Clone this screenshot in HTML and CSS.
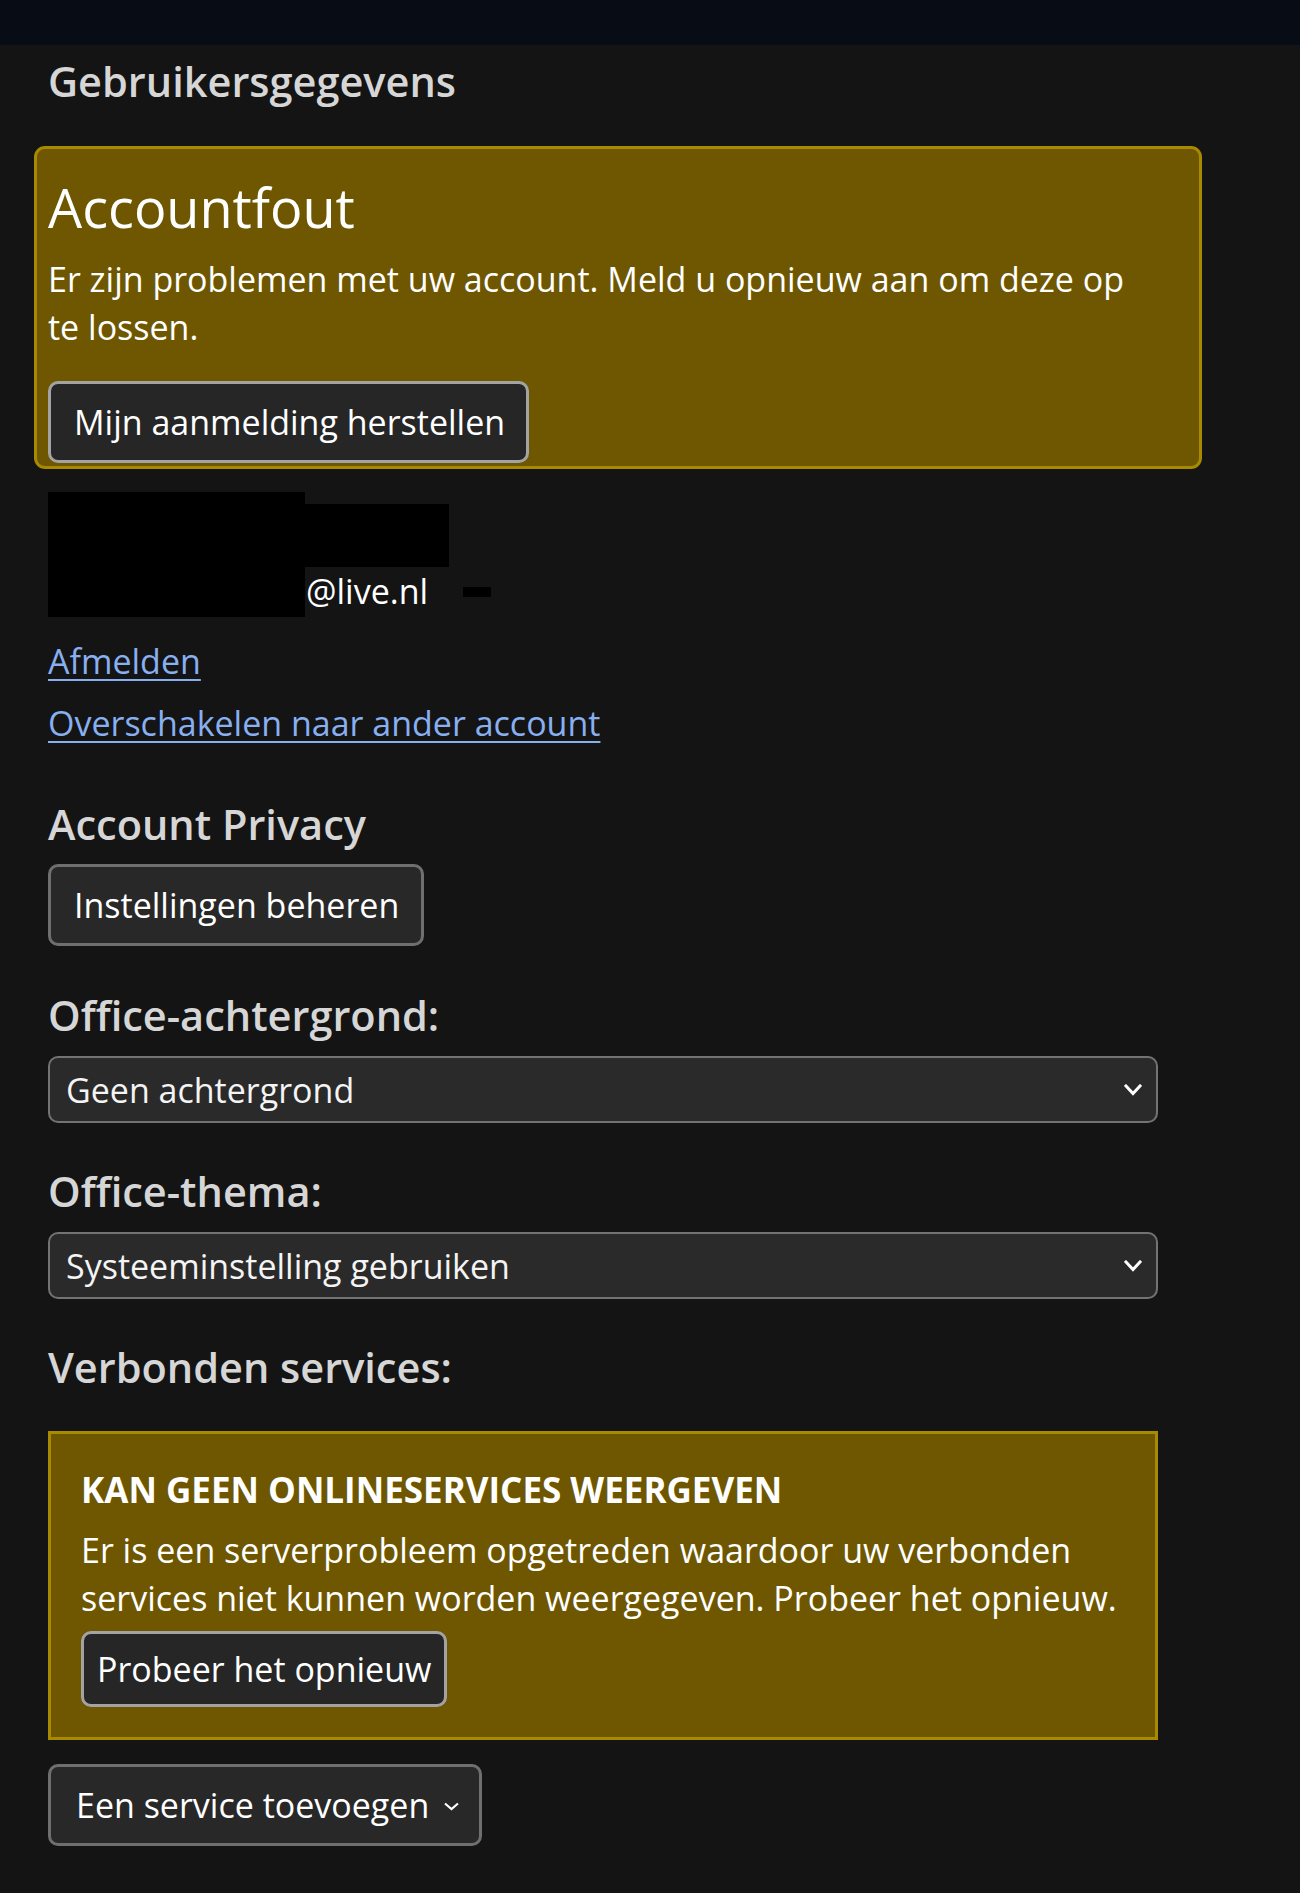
FILE: index.html
```html
<!DOCTYPE html>
<html lang="nl">
<head>
<meta charset="utf-8">
<title>Gebruikersgegevens</title>
<link rel="stylesheet" href="styles.css">
</head>
<body>
<header class="topbar"></header>
<main class="panel">
  <h1 class="section-title title-first">Gebruikersgegevens</h1>

  <section class="alert alert-account">
    <h2 class="alert-heading">Accountfout</h2>
    <p class="alert-text">Er zijn problemen met uw account. Meld u opnieuw aan om deze op te lossen.</p>
    <button class="btn btn-alert btn-fix">Mijn aanmelding herstellen</button>
  </section>

  <div class="user">
    <div class="redact redact-name"></div>
    <div class="user-lines">
      <div class="redact redact-top"></div>
      <div class="email"><span class="email-text">@live.nl</span><span class="redact redact-dash"></span></div>
    </div>
  </div>

  <div class="links">
    <a class="link" href="#">Afmelden</a>
    <a class="link" href="#">Overschakelen naar ander account</a>
  </div>

  <h2 class="section-title title-privacy">Account Privacy</h2>
  <button class="btn btn-plain btn-privacy">Instellingen beheren</button>

  <h2 class="section-title title-field title-bg">Office-achtergrond:</h2>
  <div class="select">
    <span class="select-value">Geen achtergrond</span>
    <svg class="chev" viewBox="0 0 18 12" width="18" height="12" aria-hidden="true"><polyline points="2,2 9,9.5 16,2" fill="none" stroke="#ffffff" stroke-width="3" stroke-linecap="square"/></svg>
  </div>

  <h2 class="section-title title-field">Office-thema:</h2>
  <div class="select">
    <span class="select-value">Systeeminstelling gebruiken</span>
    <svg class="chev" viewBox="0 0 18 12" width="18" height="12" aria-hidden="true"><polyline points="2,2 9,9.5 16,2" fill="none" stroke="#ffffff" stroke-width="3" stroke-linecap="square"/></svg>
  </div>

  <h2 class="section-title title-field">Verbonden services:</h2>

  <section class="alert alert-services">
    <h3 class="services-heading">KAN GEEN ONLINESERVICES WEERGEVEN</h3>
    <p class="alert-text">Er is een serverprobleem opgetreden waardoor uw verbonden services niet kunnen worden weergegeven. Probeer het opnieuw.</p>
    <button class="btn btn-alert btn-retry">Probeer het opnieuw</button>
  </section>

  <button class="btn btn-plain btn-add">Een service toevoegen<svg class="chev-small" viewBox="0 0 17 9" width="17" height="9" aria-hidden="true"><polyline points="2,1.5 8.5,7 15,1.5" fill="none" stroke="#ffffff" stroke-width="2.2"/></svg></button>
</main>
</body>
</html>
```

FILE: styles.css
```css
html, body {
  margin: 0;
  padding: 0;
  background: #141414;
}

body {
  font-family: "Open Sans", "Noto Sans", sans-serif;
  color: #ffffff;
  min-height: 1893px;
}

.topbar {
  height: 45px;
  background: #080c15;
}

.panel {
  display: flex;
  flex-direction: column;
  align-items: flex-start;
  padding-left: 48px;
}

.section-title {
  margin: 0;
  font-size: 41.5px;
  font-weight: 600;
  line-height: 60px;
  color: #d6d6d6;
}

.title-first { margin-top: 6px; }
.title-privacy { margin-top: 40px; }
.title-field { margin-top: 38px; }
.title-bg { margin-top: 39px; }

.alert {
  box-sizing: border-box;
  background: #6e5700;
  border: 3px solid #a88a00;
  display: flex;
  flex-direction: column;
  align-items: flex-start;
}

.alert-account {
  margin-top: 35px;
  margin-left: -14px;
  width: 1168px;
  border-radius: 11px;
  padding: 22px 11px 3px 11px;
}

.alert-heading {
  margin: 0;
  font-size: 54px;
  font-weight: 400;
  line-height: 72px;
  color: #ffffff;
}

.alert-text {
  margin: 12px 0 0 0;
  font-size: 34px;
  line-height: 48px;
  color: #ffffff;
}

.alert-account .alert-text {
  width: 1100px;
}

.btn {
  box-sizing: border-box;
  font-family: inherit;
  font-size: 34px;
  color: #ffffff;
  background: #272727;
  border-radius: 10px;
  border: 3px solid #6f6f6f;
  cursor: pointer;
  display: inline-flex;
  align-items: center;
  line-height: 1;
}

.btn-alert {
  border-color: #a3a3a3;
  background: #262626;
}

.btn-fix {
  margin-top: 30px;
  height: 82px;
  padding: 0 21px 0 23px;
}

.btn-retry {
  margin-top: 9px;
  height: 76px;
  padding: 0 13px 0 13px;
}

.btn-plain {
  background: #282828;
}

.btn-privacy {
  margin-top: 10px;
  height: 82px;
  padding: 0 22px 0 23px;
}

.btn-add {
  margin-top: 24px;
  height: 82px;
  padding: 0 19px 0 25px;
}

.chev-small {
  margin-left: 14px;
  margin-top: 2px;
}

.user {
  margin-top: 23px;
  display: flex;
  align-items: flex-start;
}

.redact {
  background: #000000;
}

.redact-name {
  width: 257px;
  height: 125px;
}

.user-lines {
  display: flex;
  flex-direction: column;
  align-items: flex-start;
}

.redact-top {
  margin-top: 12px;
  width: 144px;
  height: 63px;
}

.email {
  display: flex;
  align-items: center;
  height: 48px;
  font-size: 34px;
  line-height: 48px;
  color: #ffffff;
}

.email-text {
  padding-left: 1px;
}

.redact-dash {
  display: inline-block;
  width: 28px;
  height: 10px;
  margin-left: 35px;
  margin-top: 2px;
}

.links {
  margin-top: 13px;
  display: flex;
  flex-direction: column;
  align-items: flex-start;
}

.link {
  font-size: 34px;
  line-height: 62px;
  color: #88aff0;
  text-decoration: underline;
  text-decoration-thickness: 2px;
  text-underline-offset: 5px;
}

.select {
  box-sizing: border-box;
  margin-top: 11px;
  width: 1110px;
  height: 67px;
  border: 2px solid #737373;
  border-radius: 10px;
  background: #2a2a2a;
  display: flex;
  align-items: center;
  justify-content: space-between;
  padding: 0 14px 0 16px;
}

.select-value {
  font-size: 34px;
  color: #f4f4f4;
}

.alert-services {
  margin-top: 34px;
  width: 1110px;
  padding: 32px 18px 30px 30px;
}

.services-heading {
  margin: 0;
  font-size: 35px;
  font-weight: 700;
  line-height: 48px;
  color: #ffffff;
}
```
